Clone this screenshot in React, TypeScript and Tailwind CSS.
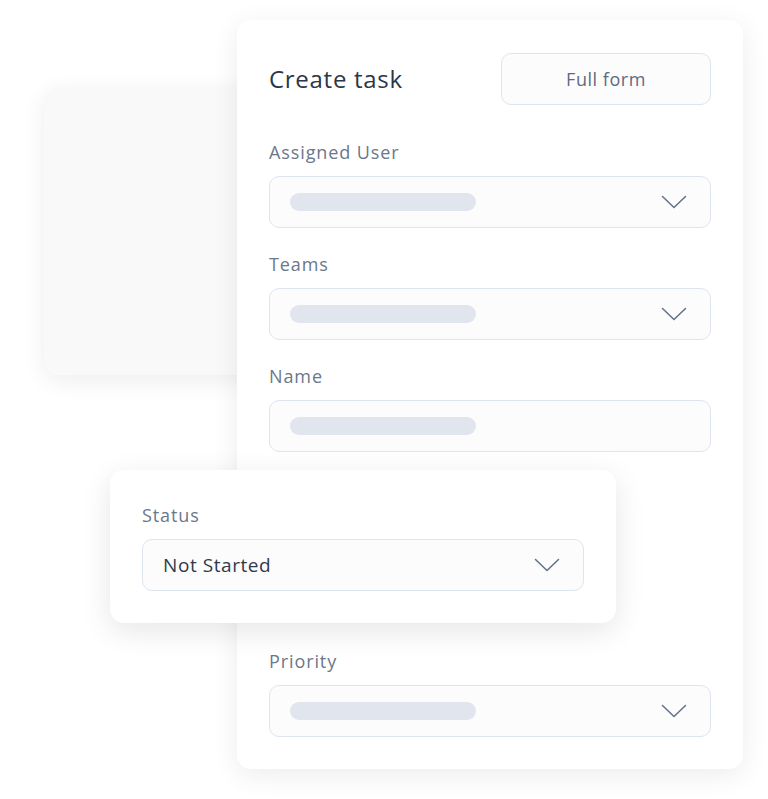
import { ReactNode } from "react";

const Chevron = () => (
    <svg width="26" height="14" viewBox="0 0 26 14" fill="none" className="shrink-0">
        <polyline points="1.5,1.5 13,12.5 24.5,1.5" stroke="#64748b" strokeWidth="1.6" strokeLinecap="round" strokeLinejoin="round" />
    </svg>
);

const Skeleton = () => <div className="h-[18px] w-[186px] rounded-full bg-[#e0e5ee]" />;

const Field = ({ label, children, select = true }: { label: string; children: ReactNode; select?: boolean }) => (
    <div className="flex flex-col">
        <label className="text-[18px] leading-6 tracking-[0.05em] text-[#6b778a]">{label}</label>
        <div className="mt-3 flex h-[52px] items-center justify-between rounded-[10px] border border-[#dfe5ee] bg-[#fcfcfd] pl-[20px] pr-[23px]">
            {children}
            {select && <Chevron />}
        </div>
    </div>
);

export default function App() {
    return (
        <div className="relative h-[799px] w-[768px] overflow-hidden bg-white font-['Open_Sans',sans-serif]">
            {/* back card */}
            <div className="absolute left-[44px] top-[87px] h-[288px] w-[240px] rounded-[14px] bg-[#f9f9f9] shadow-[0_6px_24px_rgba(0,0,0,0.07)]" />

            {/* main card */}
            <div className="absolute left-[237px] top-[20px] flex w-[506px] flex-col rounded-[14px] bg-white px-8 pb-8 pt-[33px] shadow-[0_6px_28px_rgba(0,0,0,0.08)]">
                <div className="flex h-[52px] items-center justify-between">
                    <h1 className="text-[24px] font-medium tracking-[0.03em] text-[#2b3648]">Create task</h1>
                    <button className="flex h-[52px] w-[210px] items-center justify-center rounded-[10px] border border-[#dfe5ee] bg-[#fcfcfd] text-[18px] tracking-[0.03em] text-[#5f6b7d]">
                        Full form
                    </button>
                </div>
                <div className="mt-[35px] flex flex-col gap-[24px]">
                    <Field label="Assigned User">
                        <Skeleton />
                    </Field>
                    <Field label="Teams">
                        <Skeleton />
                    </Field>
                    <Field label="Name" select={false}>
                        <Skeleton />
                    </Field>
                </div>
                <div className="h-[197px]" />
                <Field label="Priority">
                    <Skeleton />
                </Field>
            </div>

            {/* status popover */}
            <div className="absolute left-[110px] top-[470px] flex w-[506px] flex-col rounded-[14px] bg-white px-8 pb-8 pt-[33px] shadow-[0_8px_30px_rgba(0,0,0,0.10)]">
                <Field label="Status">
                    <span className="text-[19px] tracking-[0.03em] text-[#2f3a4b]">Not Started</span>
                </Field>
            </div>
        </div>
    );
}
